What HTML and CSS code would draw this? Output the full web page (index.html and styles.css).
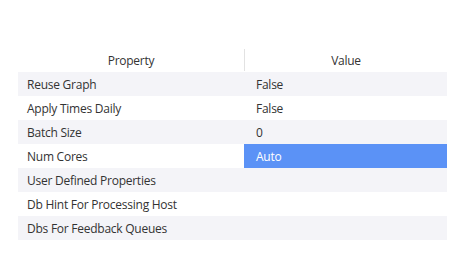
FILE: index.html
```html
<!DOCTYPE html>
<html lang="en">
<head>
  <meta charset="UTF-8" />
  <title>Properties</title>
  <link rel="stylesheet" href="styles.css">
</head>
<body>
  <div class="prop-grid">
    <div class="prop-head">
      <div class="cell name">Property</div>
      <div class="cell value">Value</div>
    </div>

    <div class="prop-row">
      <div class="cell name">Reuse Graph</div>
      <div class="cell value">False</div>
    </div>
    <div class="prop-row">
      <div class="cell name">Apply Times Daily</div>
      <div class="cell value">False</div>
    </div>
    <div class="prop-row">
      <div class="cell name">Batch Size</div>
      <div class="cell value">0</div>
    </div>
    <div class="prop-row">
      <div class="cell name">Num Cores</div>
      <div class="cell value selected">Auto</div>
    </div>
    <div class="prop-row">
      <div class="cell name">User Defined Properties</div>
      <div class="cell value"></div>
    </div>
    <div class="prop-row">
      <div class="cell name">Db Hint For Processing Host</div>
      <div class="cell value"></div>
    </div>
    <div class="prop-row">
      <div class="cell name">Dbs For Feedback Queues</div>
      <div class="cell value"></div>
    </div>
  </div>
</body>
</html>
```

FILE: styles.css
```css
body {
  margin: 0;
  padding: 0;
  background: #ffffff;
  font-family: 'Open Sans', 'Noto Sans', sans-serif;
  font-size: 12px;
  letter-spacing: -0.25px;
  color: #333333;
}

.prop-grid {
  width: 429px;
  margin: 48px 0 0 18px;
}

.prop-head,
.prop-row {
  display: flex;
  height: 24px;
}

.cell {
  display: flex;
  align-items: center;
  white-space: nowrap;
}

.cell.name {
  width: 226px;
  padding-left: 9px;
  box-sizing: border-box;
}

.cell.value {
  flex: 1;
  padding-left: 12px;
}

/* header: centred titles, thin divider between the columns */
.prop-head .cell {
  justify-content: center;
  padding-left: 0;
  margin-top: 1px;
  height: 22px;
}

.prop-head .cell.value {
  border-left: 1px solid #e2e2e2;
}

.prop-row:nth-child(even) {
  background: #f4f4f8;
}

.cell.selected {
  background: #5b92f6;
  color: #ffffff;
}
```
